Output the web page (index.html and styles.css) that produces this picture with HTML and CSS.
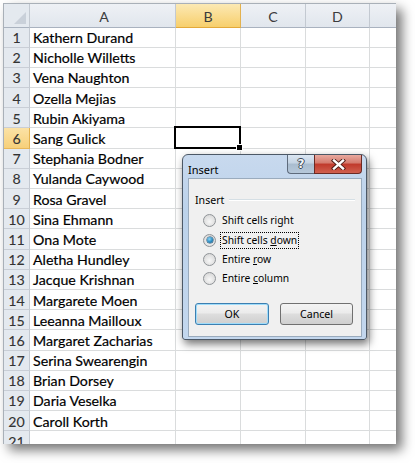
FILE: index.html
```html
<!DOCTYPE html>
<html>
<head>
<meta charset="utf-8">
<link rel="stylesheet" href="styles.css">
</head>
<body>
<div class="sheet">
  <div class="row head">
    <div class="c rh corner"><span class="tri"></span></div>
    <div class="c ca">A</div>
    <div class="c cb sel">B</div>
    <div class="c cc">C</div>
    <div class="c cd">D</div>
    <div class="c ce"></div>
  </div>
  <div class="row"><div class="c rh">1</div><div class="c ca">Kathern Durand</div><div class="c cb"></div><div class="c cc"></div><div class="c cd"></div><div class="c ce"></div></div>
  <div class="row"><div class="c rh">2</div><div class="c ca">Nicholle Willetts</div><div class="c cb"></div><div class="c cc"></div><div class="c cd"></div><div class="c ce"></div></div>
  <div class="row"><div class="c rh">3</div><div class="c ca">Vena Naughton</div><div class="c cb"></div><div class="c cc"></div><div class="c cd"></div><div class="c ce"></div></div>
  <div class="row"><div class="c rh">4</div><div class="c ca">Ozella Mejias</div><div class="c cb"></div><div class="c cc"></div><div class="c cd"></div><div class="c ce"></div></div>
  <div class="row"><div class="c rh">5</div><div class="c ca">Rubin Akiyama</div><div class="c cb"></div><div class="c cc"></div><div class="c cd"></div><div class="c ce"></div></div>
  <div class="row"><div class="c rh selrow">6</div><div class="c ca">Sang Gulick</div><div class="c cb active"><span class="handle"></span></div><div class="c cc"></div><div class="c cd"></div><div class="c ce"></div></div>
  <div class="row"><div class="c rh">7</div><div class="c ca">Stephania Bodner</div><div class="c cb"></div><div class="c cc"></div><div class="c cd"></div><div class="c ce"></div></div>
  <div class="row"><div class="c rh">8</div><div class="c ca">Yulanda Caywood</div><div class="c cb"></div><div class="c cc"></div><div class="c cd"></div><div class="c ce"></div></div>
  <div class="row"><div class="c rh">9</div><div class="c ca">Rosa Gravel</div><div class="c cb"></div><div class="c cc"></div><div class="c cd"></div><div class="c ce"></div></div>
  <div class="row"><div class="c rh">10</div><div class="c ca">Sina Ehmann</div><div class="c cb"></div><div class="c cc"></div><div class="c cd"></div><div class="c ce"></div></div>
  <div class="row"><div class="c rh">11</div><div class="c ca">Ona Mote</div><div class="c cb"></div><div class="c cc"></div><div class="c cd"></div><div class="c ce"></div></div>
  <div class="row"><div class="c rh">12</div><div class="c ca">Aletha Hundley</div><div class="c cb"></div><div class="c cc"></div><div class="c cd"></div><div class="c ce"></div></div>
  <div class="row"><div class="c rh">13</div><div class="c ca">Jacque Krishnan</div><div class="c cb"></div><div class="c cc"></div><div class="c cd"></div><div class="c ce"></div></div>
  <div class="row"><div class="c rh">14</div><div class="c ca">Margarete Moen</div><div class="c cb"></div><div class="c cc"></div><div class="c cd"></div><div class="c ce"></div></div>
  <div class="row"><div class="c rh">15</div><div class="c ca">Leeanna Mailloux</div><div class="c cb"></div><div class="c cc"></div><div class="c cd"></div><div class="c ce"></div></div>
  <div class="row"><div class="c rh">16</div><div class="c ca">Margaret Zacharias</div><div class="c cb"></div><div class="c cc"></div><div class="c cd"></div><div class="c ce"></div></div>
  <div class="row"><div class="c rh">17</div><div class="c ca">Serina Swearengin</div><div class="c cb"></div><div class="c cc"></div><div class="c cd"></div><div class="c ce"></div></div>
  <div class="row"><div class="c rh">18</div><div class="c ca">Brian Dorsey</div><div class="c cb"></div><div class="c cc"></div><div class="c cd"></div><div class="c ce"></div></div>
  <div class="row"><div class="c rh">19</div><div class="c ca">Daria Veselka</div><div class="c cb"></div><div class="c cc"></div><div class="c cd"></div><div class="c ce"></div></div>
  <div class="row"><div class="c rh">20</div><div class="c ca">Caroll Korth</div><div class="c cb"></div><div class="c cc"></div><div class="c cd"></div><div class="c ce"></div></div>
  <div class="row"><div class="c rh">21</div><div class="c ca"></div><div class="c cb"></div><div class="c cc"></div><div class="c cd"></div><div class="c ce"></div></div>
</div>

<div class="dialog">
  <div class="titlebar">
    <span class="title">Insert</span>
    <div class="tbtns">
      <div class="tbtn help">?</div>
      <div class="tbtn close">
        <svg width="15" height="11" viewBox="0 0 15 11">
          <path d="M3 1.5 L12 9.5 M12 1.5 L3 9.5" stroke="#4a1a14" stroke-width="4.2" stroke-linecap="square" fill="none"/>
          <path d="M3 1.5 L12 9.5 M12 1.5 L3 9.5" stroke="#ffffff" stroke-width="2.4" stroke-linecap="square" fill="none"/>
        </svg>
      </div>
    </div>
  </div>
  <div class="content">
    <div class="group">
      <span class="glabel">Insert</span>
      <span class="gline"></span>
    </div>
    <div class="options">
      <div class="opt"><span class="radio"></span><span class="otext">Shift cells right</span></div>
      <div class="opt"><span class="radio on"></span><span class="otext focus">Shift cells <u>d</u>own</span></div>
      <div class="opt"><span class="radio"></span><span class="otext">Entire <u>r</u>ow</span></div>
      <div class="opt"><span class="radio"></span><span class="otext">Entire <u>c</u>olumn</span></div>
    </div>
    <div class="buttons">
      <div class="btn default">OK</div>
      <div class="btn">Cancel</div>
    </div>
  </div>
</div>
</body>
</html>
```

FILE: styles.css
```css
html, body {
  margin: 0;
  padding: 0;
  background: #ffffff;
}

body {
  width: 415px;
  height: 463px;
  position: relative;
  overflow: hidden;
}

.sheet {
  margin: 3px 0 0 3px;
  width: 393px;
  height: 441px;
  box-sizing: border-box;
  border: 1px solid #a9b0b8;
  border-right: none;
  border-bottom: none;
  overflow: hidden;
  background: #ffffff;
  box-shadow: 6px 6px 11px rgba(0, 0, 0, 0.55);
  font-family: Lato, "Liberation Sans", sans-serif;
  font-size: 14.2px;
  color: #000;
  -webkit-text-stroke: 0.2px #000;
}

.row {
  display: flex;
  height: 20.2px;
}

.row.head {
  height: 23.5px;
}

.c {
  box-sizing: border-box;
  border-right: 1px solid #dadcdd;
  border-bottom: 1px solid #dadcdd;
  flex: none;
  white-space: nowrap;
  overflow: hidden;
  display: flex;
  align-items: center;
  position: relative;
}

.rh { width: 26px; }
.ca { width: 146px; }
.cb { width: 65px; }
.cc { width: 65px; }
.cd { width: 64px; }
.ce { width: 30px; }

.row .ca {
  padding-left: 3px;
  padding-top: 1px;
}

.rh {
  background: #e4e9ef;
  border-right: 1px solid #c3c9d1;
  border-bottom: 1px solid #c9ced6;
  justify-content: center;
  color: #333333;
  -webkit-text-stroke: 0.1px #333;
  padding-top: 1px;
}

.head .c {
  background: linear-gradient(#eef1f5, #e1e6ed);
  border-right: 1px solid #c3c9d1;
  border-bottom: 1px solid #a9b2bf;
  justify-content: center;
  color: #3c3c3c;
  -webkit-text-stroke: 0;
  padding-top: 3px;
}

.head .corner {
  background: #e4e9ef;
}

.tri {
  position: absolute;
  right: 3px;
  bottom: 3px;
  width: 0;
  height: 0;
  border-left: 12px solid transparent;
  border-bottom: 12px solid #c9d0d9;
}

.head .sel {
  background: linear-gradient(#fce9b4, #f7cf6c);
  border-right: 1px solid #e3b14e;
  border-bottom: 1px solid #e3a93a;
  color: #3c3c3c;
}

.rh.selrow {
  background: linear-gradient(#fbe2a6, #f7d07a);
  border-bottom: 1px solid #e8b75a;
  border-right: 1px solid #e3b14e;
}

.active {
  overflow: visible;
  z-index: 2;
}

.active::before {
  content: "";
  position: absolute;
  left: -2px;
  top: -2px;
  right: -1px;
  bottom: -1px;
  border: 2px solid #000;
}

.handle {
  position: absolute;
  right: -3px;
  bottom: -3px;
  width: 5px;
  height: 5px;
  background: #000;
  border: 1px solid #fff;
}

/* Dialog */
.dialog {
  position: absolute;
  left: 182px;
  top: 154px;
  width: 185px;
  height: 186px;
  box-sizing: border-box;
  border: 1px solid #4c5866;
  border-radius: 6px 6px 3px 3px;
  background: linear-gradient(#c8d9ee, #bcd2ea 30%, #c3d7ee);
  box-shadow: 2px 4px 9px rgba(0, 0, 0, 0.55);
  display: flex;
  flex-direction: column;
  font-family: "Noto Sans", "Open Sans", sans-serif;
  font-size: 10.3px;
  color: #000;
  z-index: 10;
}

.titlebar {
  height: 23px;
  display: flex;
  justify-content: space-between;
  align-items: flex-start;
  padding-left: 5px;
  padding-right: 4px;
}

.title {
  margin-top: 7px;
  font-size: 11px;
  line-height: 15px;
}

.tbtns {
  display: flex;
}

.tbtn {
  height: 19px;
  box-sizing: border-box;
  border: 1px solid #5e6b7c;
  border-top: none;
  display: flex;
  align-items: center;
  justify-content: center;
}

.help {
  width: 27px;
  border-radius: 0 0 0 4px;
  border-right: none;
  background: linear-gradient(#dbe6f2, #c4d3e3 45%, #a9bccf 50%, #b6c8da);
  color: #f2f5f8;
  font-family: "DejaVu Sans", sans-serif;
  font-weight: bold;
  font-size: 12px;
  text-shadow: 1px 0 0 #3e4856, -1px 0 0 #3e4856, 0 1px 0 #3e4856, 0 -1px 0 #3e4856;
}

.close {
  width: 48px;
  border-radius: 0 0 4px 0;
  background: linear-gradient(#e8a99f, #d47a6d 45%, #c0392b 50%, #d0604f);
  border-color: #6b2a24;
}

.content {
  flex: 1;
  margin: 0 4px 2px 5px;
  background: #f0f0f0;
  border: 1px solid #9aabbd;
  padding: 0 6px;
  display: flex;
  flex-direction: column;
}

.group {
  display: flex;
  align-items: center;
  height: 16px;
  margin-top: 13px;
}

.glabel {
  line-height: 16px;
  font-size: 10.6px;
}

.gline {
  flex: 1;
  height: 1px;
  margin-left: 5px;
  margin-right: 0;
  background: #d5dfe5;
  border-bottom: 1px solid #fff;
}

.options {
  margin-top: 3px;
  padding-left: 8px;
  display: flex;
  flex-direction: column;
}

.opt {
  height: 19.4px;
  display: flex;
  align-items: center;
}

.radio {
  width: 13px;
  height: 13px;
  box-sizing: border-box;
  border-radius: 50%;
  border: 1px solid #8f9397;
  background: radial-gradient(circle at 50% 60%, #f7f7f7, #dcdcdc 70%, #cfcfcf);
  position: relative;
  flex: none;
}

.radio.on::after {
  content: "";
  position: absolute;
  left: 2.5px;
  top: 2.5px;
  width: 6px;
  height: 6px;
  border-radius: 50%;
  background: radial-gradient(circle at 40% 35%, #8fd6f7, #2a8bc0 55%, #1a4f78);
  box-shadow: 0 0 0 0.5px #1d4d70;
}

.otext {
  margin-left: 4px;
  line-height: 15px;
  padding: 0 1px;
  border: 1px solid transparent;
}

.otext.focus {
  border: 1px dotted #000;
}

.buttons {
  margin-top: 14px;
  display: flex;
  gap: 11px;
  font-size: 10.6px;
}

.btn {
  width: 73px;
  height: 22px;
  box-sizing: border-box;
  border: 1px solid #707070;
  border-radius: 3px;
  background: linear-gradient(#f3f3f3, #ebebeb 45%, #dddddd 50%, #cfcfcf);
  display: flex;
  align-items: center;
  justify-content: center;
}

.btn.default {
  width: 74px;
  border-color: #3c7fb1;
  box-shadow: inset 0 0 0 1px #9fdcfa;
}
```
